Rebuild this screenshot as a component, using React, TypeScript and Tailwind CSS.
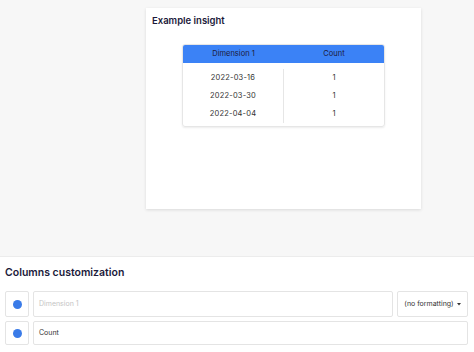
import React from "react";

const rows = ["2022-03-16", "2022-03-30", "2022-04-04"];

export default function App() {
  return (
    <div className="w-[474px] h-[352px] bg-white overflow-hidden" style={{ fontFamily: "Inter, 'Noto Sans', sans-serif" }}>
      <div className="h-[257px] bg-[#f7f7f7] border-b border-[#ececec] pl-[146px] pt-[8px]">
        <div className="w-[275px] h-[201px] bg-white shadow-[0_1px_3px_rgba(0,0,0,0.12)] px-[6px] pt-[6px]">
          <div className="text-[9.5px] leading-[14px] font-semibold text-[#1b1a3a]">Example insight</div>
          <div className="mt-[16px] mx-auto w-[203px] rounded-[3px] border border-[#e6e6e6] shadow-[0_1px_2px_rgba(0,0,0,0.08)] overflow-hidden">
            <div className="flex h-[18px] bg-[#3b82f6] text-[7.5px] text-[#1b1a3a] items-center">
              <div className="w-[101px] text-center">Dimension 1</div>
              <div className="flex-1 text-center">Count</div>
            </div>
            <div className="flex pt-[6px] pb-[1px] text-[7.5px] text-[#333]">
              <div className="w-[101px] border-r border-[#e6e6e6] mb-[2px]">
                {rows.map((r) => (
                  <div key={r} className="h-[18px] flex items-center justify-center tracking-[0.2px]">{r}</div>
                ))}
              </div>
              <div className="flex-1">
                {rows.map((r) => (
                  <div key={r} className="h-[18px] flex items-center justify-center">1</div>
                ))}
              </div>
            </div>
          </div>
        </div>
      </div>
      <div className="px-[5px] pr-[6px]">
        <div className="mt-[8px] text-[10.5px] leading-[16px] font-semibold text-[#1b1a3a]">Columns customization</div>
        <div className="mt-[10px] flex flex-col gap-[4px]">
          <div className="flex gap-[4px] h-[26px]">
            <div className="w-[24px] rounded-[2px] border border-[#e4e4e4] flex items-center justify-center">
              <div className="w-[9px] h-[9px] rounded-full bg-[#3a7be8]"></div>
            </div>
            <div className="flex-1 rounded-[2px] border border-[#e4e4e4] flex items-center px-[5px] text-[7px] text-[#c4c4c4]">Dimension 1</div>
            <div className="w-[71px] rounded-[2px] border border-[#e4e4e4] flex items-center justify-center gap-[3px] text-[7px] text-[#333] whitespace-nowrap">
              <span>(no formatting)</span>
              <svg width="4" height="3" viewBox="0 0 4 3"><path d="M0 0h4L2 2.5z" fill="#333" /></svg>
            </div>
          </div>
          <div className="flex gap-[4px] h-[24px]">
            <div className="w-[24px] rounded-[2px] border border-[#e4e4e4] flex items-center justify-center">
              <div className="w-[9px] h-[9px] rounded-full bg-[#3a7be8]"></div>
            </div>
            <div className="flex-1 rounded-[2px] border border-[#e4e4e4] flex items-center px-[5px] text-[7px] text-[#333]">Count</div>
          </div>
        </div>
      </div>
    </div>
  );
}
